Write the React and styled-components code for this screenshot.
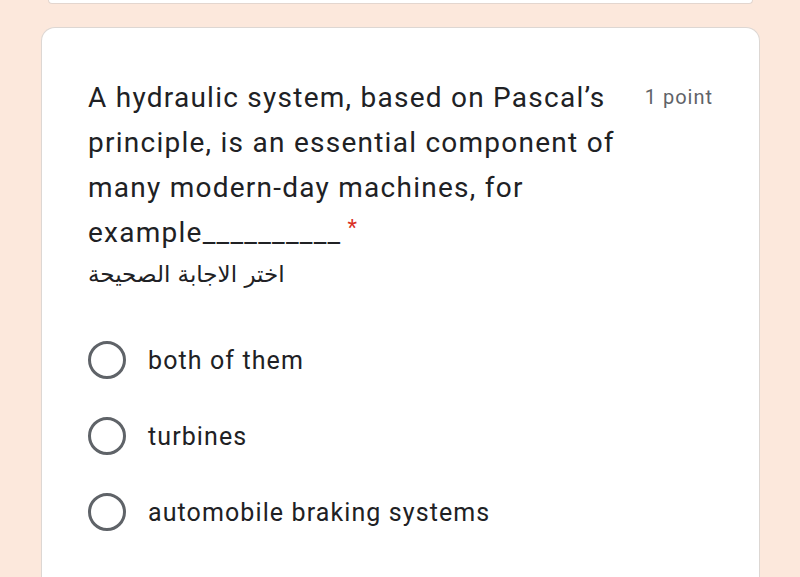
import React from 'react';
import styled, {createGlobalStyle} from 'styled-components';

const GlobalStyle = createGlobalStyle`
    html, body{
        margin: 0;
        padding: 0;
        background-color: #fce8dc;
        font-family: Roboto, "Noto Sans", "DejaVu Sans", sans-serif;
        overflow: hidden;
    }
`

const Page = styled.div`
    width: 800px;
    height: 577px;
    padding: 0 40px 0 41px;
    box-sizing: border-box;
    display: flex;
    flex-direction: column;
    overflow: hidden;
`

const PrevCard = styled.div`
    height: 3px;
    margin: 0 7px;
    background-color: #fff;
    border: 1px solid #e3d6cf;
    border-top: none;
    border-radius: 0 0 8px 8px;
`

const Card = styled.div`
    margin-top: 23px;
    flex: 1;
    background-color: #fff;
    border: 1px solid #ddd7d3;
    border-bottom: none;
    border-radius: 14px 14px 0 0;
    padding: 47px 46px 0 46px;
    display: flex;
    flex-direction: column;
`

const Header = styled.div`
    display: flex;
    align-items: flex-start;
    gap: 20px;
`

const Question = styled.div`
    flex: 1;
    font-size: 28px;
    line-height: 45px;
    color: #202124;
    letter-spacing: 1.25px;

    .required{
        position: relative;
        top: -7px;
        color: #d93025;
        font-size: 22px;
        line-height: 0;
        margin-left: 6px;
    }
`

const Points = styled.div`
    flex-shrink: 0;
    font-size: 20px;
    line-height: 45px;
    letter-spacing: 1px;
    color: #5f6368;
`

const Hint = styled.div`
    margin-top: 4px;
    font-family: "DejaVu Sans", "Noto Sans", sans-serif;
    font-size: 23px;
    line-height: 30px;
    color: #202124;
    text-align: left;
`

const Options = styled.div`
    margin-top: 52px;
    display: flex;
    flex-direction: column;
    gap: 38px;
`

const Option = styled.label`
    display: flex;
    align-items: center;
    gap: 22px;
    height: 38px;
    font-size: 25px;
    letter-spacing: 1.1px;
    color: #202124;
`

const Radio = styled.span`
    width: 32px;
    height: 32px;
    border: 3px solid #5f6368;
    border-radius: 50%;
    flex-shrink: 0;
`

const options = ['both of them', 'turbines', 'automobile braking systems']

const App = () =>{
    return(
        <>
            <GlobalStyle/>
            <Page>
                <PrevCard/>
                <Card>
                    <Header>
                        <Question>
                            A hydraulic system, based on Pascal’s principle, is an essential component of many modern-day machines, for example__________
                            <span className="required">*</span>
                        </Question>
                        <Points>1 point</Points>
                    </Header>
                    <Hint><span dir="rtl">اختر الاجابة الصحيحة</span></Hint>
                    <Options>
                        {options.map(opt => (
                            <Option key={opt}>
                                <Radio/>
                                {opt}
                            </Option>
                        ))}
                    </Options>
                </Card>
            </Page>
        </>
    )
}

export default App
